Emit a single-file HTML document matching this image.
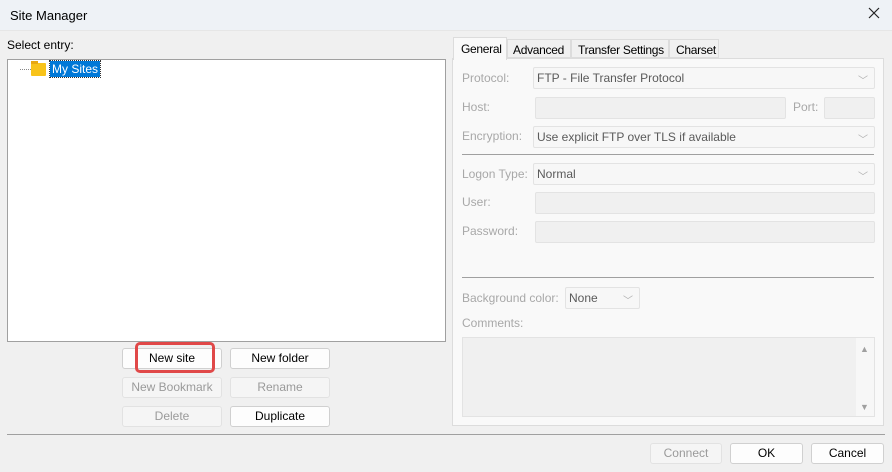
<!DOCTYPE html>
<html><head><style>
*{box-sizing:border-box;margin:0;padding:0}
body{width:892px;height:472px;overflow:hidden;background:#f0f0f0;font-family:"Liberation Sans",sans-serif;font-size:12px;color:#000;position:relative}
.a{position:absolute;white-space:nowrap}
.btn{position:absolute;height:21px;border:1px solid #d0d0d0;border-radius:3px;background:#fdfdfd;text-align:center;line-height:19px;font-size:12px}
.dis{color:#9a9a9a;background:#f5f5f5;border-color:#e2e2e2}
.lbl{position:absolute;color:#a8a8a8;font-size:12px;white-space:nowrap}
.fld{position:absolute;height:22px;border:1px solid #e3e3e3;background:#f0f0f0;border-radius:2px;color:#5a5a5a;padding-left:3px;line-height:20px;white-space:nowrap}
.sel{background:#f7f7f7}
.chev{position:absolute;right:6px;top:4px;color:#b0b0b0;font-size:10px}
.tab{letter-spacing:-0.3px}
</style></head><body>
<div class="a" style="left:0;top:0;width:892px;height:31px;background:#eef2f6;border-bottom:1px solid #e6e6e6"></div>
<div class="a" style="left:10px;top:8px;font-size:13px">Site Manager</div>
<svg class="a" style="left:868px;top:7px" width="12" height="12"><path d="M1 1L11 11M11 1L1 11" stroke="#222" stroke-width="1.2"/></svg>
<div class="a" style="left:7px;top:38px">Select entry:</div>
<div class="a" style="left:7px;top:59px;width:439px;height:283px;background:#fff;border:1px solid #a0a0a0"></div>
<div class="a" style="left:20px;top:69px;width:11px;border-top:1px dotted #888"></div>
<div class="a" style="left:31px;top:63px;width:15px;height:13px;background:#f8c31a;border-radius:1px"></div>
<div class="a" style="left:31px;top:61px;width:7px;height:3px;background:#e8a810"></div>
<div class="a" style="left:50px;top:61px;height:16px;padding:1px 2px;background:#0078d7;color:#fff;outline:1px dotted #333">My Sites</div>
<div class="btn" style="left:122px;top:348px;width:100px">New site</div>
<div class="a" style="left:135px;top:342px;width:80px;height:31px;border:3px solid #e04848;border-radius:5px"></div>
<div class="btn" style="left:230px;top:348px;width:100px">New folder</div>
<div class="btn dis" style="left:122px;top:377px;width:100px">New Bookmark</div>
<div class="btn dis" style="left:230px;top:377px;width:100px">Rename</div>
<div class="btn dis" style="left:122px;top:406px;width:100px">Delete</div>
<div class="btn" style="left:230px;top:406px;width:100px">Duplicate</div>
<div class="a" style="left:452px;top:58px;width:432px;height:368px;background:#f9f9f9;border:1px solid #dcdcdc"></div>
<div class="a tab" style="left:453px;top:37px;width:54px;height:23px;background:#f9f9f9;border:1px solid #dcdcdc;border-bottom:none;padding:4px 0 0 7px">General</div>
<div class="a tab" style="left:507px;top:39px;width:64px;height:19px;border:1px solid #dcdcdc;padding:3px 0 0 5px">Advanced</div>
<div class="a tab" style="left:571px;top:39px;width:98px;height:19px;border:1px solid #dcdcdc;padding:3px 0 0 6px">Transfer Settings</div>
<div class="a tab" style="left:669px;top:39px;width:50px;height:19px;border:1px solid #dcdcdc;padding:3px 0 0 6px">Charset</div>
<div class="lbl" style="left:462px;top:71px">Protocol:</div>
<div class="fld sel" style="left:533px;top:67px;width:342px">FTP - File Transfer Protocol<span class="chev">﹀</span></div>
<div class="lbl" style="left:462px;top:100px">Host:</div>
<div class="fld" style="left:535px;top:97px;width:251px"></div>
<div class="lbl" style="left:793px;top:100px">Port:</div>
<div class="fld" style="left:824px;top:97px;width:51px"></div>
<div class="lbl" style="left:462px;top:129px">Encryption:</div>
<div class="fld sel" style="left:533px;top:126px;width:342px">Use explicit FTP over TLS if available<span class="chev">﹀</span></div>
<div class="a" style="left:462px;top:154px;width:412px;border-top:1px solid #a0a0a0"></div>
<div class="lbl" style="left:462px;top:167px">Logon Type:</div>
<div class="fld sel" style="left:533px;top:163px;width:342px">Normal<span class="chev">﹀</span></div>
<div class="lbl" style="left:462px;top:195px">User:</div>
<div class="fld" style="left:535px;top:192px;width:340px"></div>
<div class="lbl" style="left:462px;top:224px">Password:</div>
<div class="fld" style="left:535px;top:221px;width:340px"></div>
<div class="a" style="left:462px;top:277px;width:412px;border-top:1px solid #a0a0a0"></div>
<div class="lbl" style="left:462px;top:291px">Background color:</div>
<div class="fld sel" style="left:565px;top:287px;width:75px">None<span class="chev">﹀</span></div>
<div class="lbl" style="left:462px;top:316px">Comments:</div>
<div class="a" style="left:462px;top:337px;width:413px;height:80px;background:#f0f0f0;border:1px solid #e3e3e3"></div>
<div class="a" style="left:856px;top:338px;width:18px;height:78px;background:#f7f7f7"></div>
<div class="a" style="left:860px;top:344px;color:#a0a0a0;font-size:9px">▲</div>
<div class="a" style="left:860px;top:402px;color:#a0a0a0;font-size:9px">▼</div>
<div class="a" style="left:7px;top:434px;width:878px;border-top:1px solid #a0a0a0"></div>
<div class="btn dis" style="left:650px;top:443px;width:72px">Connect</div>
<div class="btn" style="left:730px;top:443px;width:73px">OK</div>
<div class="btn" style="left:811px;top:443px;width:73px">Cancel</div>
</body></html>
